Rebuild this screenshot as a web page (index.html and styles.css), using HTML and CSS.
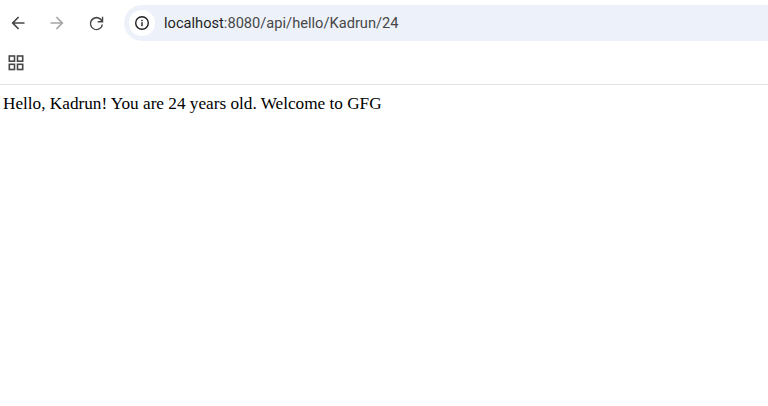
FILE: index.html
```html
<!DOCTYPE html>
<html lang="en">
<head>
<meta charset="utf-8">
<title>localhost</title>
<link rel="stylesheet" href="styles.css">
</head>
<body>
<header class="chrome">
  <div class="toolbar">
    <div class="nav">
      <button class="btn">
        <svg width="20" height="20" viewBox="0 0 20 20"><path d="M16.5 9.2H6.6l4.6-4.6L10 3.5 3.5 10l6.5 6.5 1.2-1.1-4.6-4.6h9.9z" fill="#474747"/></svg>
      </button>
      <button class="btn">
        <svg width="20" height="20" viewBox="0 0 20 20"><path d="M3.5 9.2h9.9L8.8 4.6 10 3.5l6.5 6.5-6.5 6.5-1.2-1.1 4.6-4.6H3.5z" fill="#a6a6a6"/></svg>
      </button>
      <button class="btn">
        <svg width="19" height="19" viewBox="0 0 20 20"><path d="M10 17a7 7 0 1 1 5.6-11.2V3h1.5v5.9h-5.9V7.4h3.5A5.5 5.5 0 1 0 15.4 11h1.5A7 7 0 0 1 10 17z" fill="#474747"/></svg>
      </button>
    </div>
    <div class="omnibox">
      <span class="info">
        <svg width="16" height="16" viewBox="0 0 16 16"><circle cx="8" cy="8" r="6.3" fill="none" stroke="#1f1f1f" stroke-width="1.4"/><rect x="7.3" y="7.2" width="1.4" height="4" fill="#1f1f1f"/><rect x="7.3" y="4.8" width="1.4" height="1.4" fill="#1f1f1f"/></svg>
      </span>
      <span class="url">localhost<span class="path">:8080/api/hello/Kadrun/24</span></span>
    </div>
  </div>
  <div class="bookmarks">
    <svg width="16" height="16" viewBox="0 0 16 16" fill="none" stroke="#474747" stroke-width="1.6"><rect x="1.3" y="1" width="5.2" height="5.2"/><rect x="9.5" y="1" width="5.2" height="5.2"/><rect x="1.3" y="9.3" width="5.2" height="5.2"/><rect x="9.5" y="9.3" width="5.2" height="5.2"/></svg>
  </div>
</header>
<main class="content">Hello, Kadrun! You are 24 years old. Welcome to GFG</main>
</body>
</html>
```
FILE: styles.css
```css
html, body { margin: 0; padding: 0; background: #fff; overflow: hidden; }
body { width: 768px; height: 406px; }
.chrome { height: 84px; border-bottom: 1px solid #e3e3e3; box-sizing: content-box; }
.toolbar { display: flex; align-items: center; height: 36px; padding-top: 5px; }
.nav { display: flex; align-items: center; gap: 7px; padding-left: 2px; margin-right: 12px; }
.btn { width: 32px; height: 32px; border: 0; padding: 0; background: none; display: flex; align-items: center; justify-content: center; }
.omnibox { flex: 1; height: 36px; background: #edf2fa; border-radius: 18px 0 0 18px; display: flex; align-items: center; }
.info { width: 26px; height: 26px; margin-left: 5px; border-radius: 50%; background: #fff; display: flex; align-items: center; justify-content: center; }
.url { margin-left: 9px; font: 14.65px "Roboto", "Liberation Sans", sans-serif; color: #1f1f1f; }
.path { color: #474747; }
.bookmarks { height: 43px; display: flex; align-items: center; padding-left: 8px; }
.content { padding: 10px 0 0 3px; font: 17.22px/18px "Liberation Serif", serif; color: #000; }
```
